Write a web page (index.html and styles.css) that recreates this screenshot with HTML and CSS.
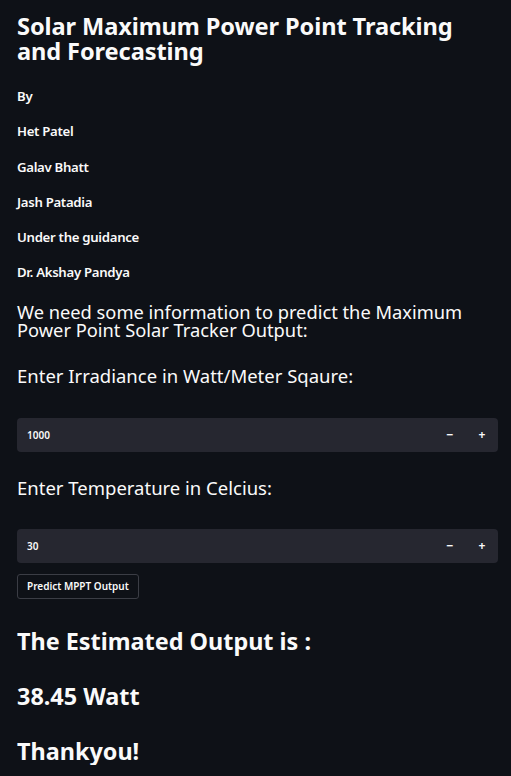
FILE: index.html
```html
<!DOCTYPE html>
<html>
<head>
<meta charset="utf-8">
<link rel="stylesheet" href="styles.css">
</head>
<body>
<main class="app">
  <h1 class="title">Solar Maximum Power Point Tracking and Forecasting</h1>
  <div class="credits">
    <p>By</p>
    <p>Het Patel</p>
    <p>Galav Bhatt</p>
    <p>Jash Patadia</p>
    <p>Under the guidance</p>
    <p>Dr. Akshay Pandya</p>
  </div>
  <h3 class="lead">We need some information to predict the Maximum Power Point Solar Tracker Output:</h3>
  <h3 class="label">Enter Irradiance in Watt/Meter Sqaure:</h3>
  <div class="number n1">
    <span class="value">1000</span>
    <span class="steps"><span class="step">&minus;</span><span class="step">+</span></span>
  </div>
  <h3 class="label label2">Enter Temperature in Celcius:</h3>
  <div class="number n2">
    <span class="value">30</span>
    <span class="steps"><span class="step">&minus;</span><span class="step">+</span></span>
  </div>
  <button class="btn">Predict MPPT Output</button>
  <h2 class="result r1">The Estimated Output is :</h2>
  <h2 class="result">38.45 Watt</h2>
  <h2 class="result">Thankyou!</h2>
</main>
</body>
</html>
```
FILE: styles.css
```css
html, body {
  margin: 0;
  padding: 0;
  background: #0e1117;
  color: #fafafa;
  font-family: "Noto Sans", "Open Sans", sans-serif;
}
.app {
  padding: 14px 13px 0 17px;
  display: flex;
  flex-direction: column;
}
.title {
  margin: 0;
  max-width: 460px;
  font-size: 23.6px;
  line-height: 25px;
  font-weight: 700;
  letter-spacing: -0.1px;
}
.credits {
  margin-top: 23px;
  display: flex;
  flex-direction: column;
  gap: 16.8px;
}
.credits p {
  margin: 0;
  font-size: 13.2px;
  line-height: 18.5px;
  font-weight: 600;
  letter-spacing: -0.3px;
}
.lead {
  margin: 21px 0 0;
  font-size: 18.3px;
  line-height: 18px;
  font-weight: 400;
}
.label {
  margin: 26px 0 0;
  font-size: 18.5px;
  line-height: 22px;
  font-weight: 400;
}
.label2 { margin-top: 25px; }
.number {
  margin-top: 31px;
  height: 34px;
  background: #262730;
  border-radius: 4px;
  display: flex;
  align-items: center;
  justify-content: space-between;
}
.n2 { margin-top: 30px; }
.value {
  padding-left: 10px;
  font-size: 10px;
  font-weight: 600;
}
.steps {
  display: flex;
  height: 100%;
}
.step {
  width: 32px;
  display: flex;
  align-items: center;
  justify-content: center;
  font-size: 12px;
  font-weight: 700;
}
.btn {
  align-self: flex-start;
  margin-top: 11px;
  height: 25px;
  padding: 0 9px;
  background: #0e1117;
  color: #fafafa;
  border: 1px solid #3b3d45;
  border-radius: 3px;
  font-family: "Noto Sans", sans-serif;
  font-size: 10px;
  font-weight: 600;
}
.result {
  margin: 27px 0 0;
  font-size: 23.4px;
  line-height: 28px;
  font-weight: 700;
}
.r1 { margin-top: 28px; }
```
